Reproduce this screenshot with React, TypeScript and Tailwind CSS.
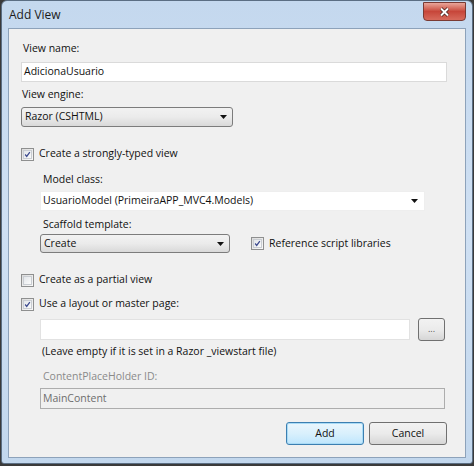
import React from "react";

const Arrow = () => (
  <svg width="7" height="4" viewBox="0 0 7 4" className="shrink-0">
    <path d="M0 0h7L3.5 4z" fill="#111" />
  </svg>
);

const Check = ({ checked }: { checked: boolean }) => (
  <div className="w-[13px] h-[13px] border border-[#8e8f8f] bg-gradient-to-br from-[#dcdcdc] to-[#fafafa] flex items-center justify-center shrink-0">
    <div className="w-[9px] h-[9px] border border-[#c9cdd2] bg-gradient-to-br from-[#e3e6ea] to-[#fbfbfb] flex items-center justify-center">
      {checked && (
        <svg width="9" height="9" viewBox="0 0 9 9">
          <path d="M1.5 4.5 L3.5 7 L7.5 1.5" stroke="#3c4a8f" strokeWidth="1.6" fill="none" />
        </svg>
      )}
    </div>
  </div>
);

export default function App() {
  return (
    <div
      className="w-[474px] h-[466px] bg-[#3a3a3a] text-[10.5px] text-[#111]"
      style={{ fontFamily: '"Open Sans", "Noto Sans", sans-serif' }}
    >
      <div className="w-[472px] h-[464px] ml-[1px] rounded-t-[6px] rounded-b-[3px] border border-[#5b6e83] bg-gradient-to-b from-[#c4d8ee] via-[#cfe0f3] to-[#c2d7ed] flex flex-col px-[6px] pb-[5px]">
        <div className="h-[27px] flex items-start justify-between shrink-0">
          <div className="pt-[5px] pl-[1px] text-[12px] text-[#1b1b1b]">Add View</div>
          <div className="mt-[1px] w-[43px] h-[19px] rounded-b-[4px] border border-[#7a3a33] bg-gradient-to-b from-[#e8a59a] via-[#c7463a] to-[#d76a5c] flex items-center justify-center">
            <svg width="11" height="10" viewBox="0 0 11 10">
              <path d="M2 1.5 L9 8.5 M9 1.5 L2 8.5" stroke="#3a1a16" strokeWidth="3.4" />
              <path d="M2 1.5 L9 8.5 M9 1.5 L2 8.5" stroke="#ffffff" strokeWidth="2" />
            </svg>
          </div>
        </div>
        <div className="flex-1 border border-[#8da2ba] bg-[#f0f0f0] flex flex-col pl-[12px] pr-[18px] pt-[11px]">
          <div className="h-[16px] leading-[16px] pl-[2px]">View name:</div>
          <div className="mt-[6px] h-[20px] border border-[#dadada] bg-white flex items-center pl-[2px]">AdicionaUsuario</div>
          <div className="mt-[4px] h-[16px] leading-[16px] pl-[1px]">View engine:</div>
          <div className="mt-[5px] w-[212px] h-[20px] rounded-[3px] border border-[#7c7c7c] bg-gradient-to-b from-[#f2f2f2] via-[#ebebeb] to-[#d9d9d9] flex items-center justify-between pl-[3px] pr-[5px]">
            <span>Razor (CSHTML)</span>
            <Arrow />
          </div>
          <div className="mt-[19px] h-[16px] flex items-center gap-[5px]">
            <Check checked />
            <span>Create a strongly-typed view</span>
          </div>
          <div className="pl-[19px] flex flex-col">
            <div className="mt-[9px] h-[16px] leading-[16px] pl-[3px]">Model class:</div>
            <div className="mt-[4px] w-[385px] h-[20px] bg-white border border-[#eeeeee] flex items-center justify-between pl-[2px] pr-[6px]">
              <span>UsuarioModel (PrimeiraAPP_MVC4.Models)</span>
              <Arrow />
            </div>
            <div className="mt-[5px] h-[16px] leading-[16px] pl-[3px]">Scaffold template:</div>
            <div className="mt-[2px] flex items-center">
              <div className="w-[190px] h-[19px] rounded-[3px] border border-[#7c7c7c] bg-gradient-to-b from-[#f2f2f2] via-[#ebebeb] to-[#d9d9d9] flex items-center justify-between pl-[3px] pr-[5px]">
                <span>Create</span>
                <Arrow />
              </div>
              <div className="ml-[21px] flex items-center gap-[5px]">
                <Check checked />
                <span>Reference script libraries</span>
              </div>
            </div>
          </div>
          <div className="mt-[19px] h-[16px] flex items-center gap-[5px]">
            <Check checked={false} />
            <span>Create as a partial view</span>
          </div>
          <div className="mt-[8px] h-[16px] flex items-center gap-[5px]">
            <Check checked />
            <span>Use a layout or master page:</span>
          </div>
          <div className="pl-[19px] flex flex-col">
            <div className="mt-[6px] flex items-center">
              <div className="w-[370px] h-[21px] bg-white border border-[#e2e2e2]" />
              <div className="ml-[8px] w-[27px] h-[23px] rounded-[3px] border border-[#707070] bg-gradient-to-b from-[#f2f2f2] via-[#ebebeb] to-[#d6d6d6] flex items-center justify-center text-[9px] leading-none pb-[3px] text-[#555]">
                ...
              </div>
            </div>
            <div className="mt-[2px] h-[16px] leading-[16px] pl-[2px]">(Leave empty if it is set in a Razor _viewstart file)</div>
            <div className="mt-[9px] h-[16px] leading-[16px] pl-[3px] text-[#8a8a8a]">ContentPlaceHolder ID:</div>
            <div className="mt-[4px] w-[405px] h-[21px] border border-[#adadad] bg-[#f0f0f0] flex items-center pl-[2px] text-[#6d6d6d]">MainContent</div>
          </div>
          <div className="mt-[13px] flex justify-end gap-[5px]">
            <div className="w-[78px] h-[23px] rounded-[3px] border border-[#3c7fb1] bg-gradient-to-b from-[#eaf6fd] via-[#d9f0fc] to-[#bee6fd] shadow-[inset_0_0_0_1px_#a9dbf6] flex items-center justify-center">
              Add
            </div>
            <div className="w-[78px] h-[23px] rounded-[3px] border border-[#707070] bg-gradient-to-b from-[#f2f2f2] via-[#ebebeb] to-[#d6d6d6] flex items-center justify-center">
              Cancel
            </div>
          </div>
        </div>
      </div>
    </div>
  );
}
